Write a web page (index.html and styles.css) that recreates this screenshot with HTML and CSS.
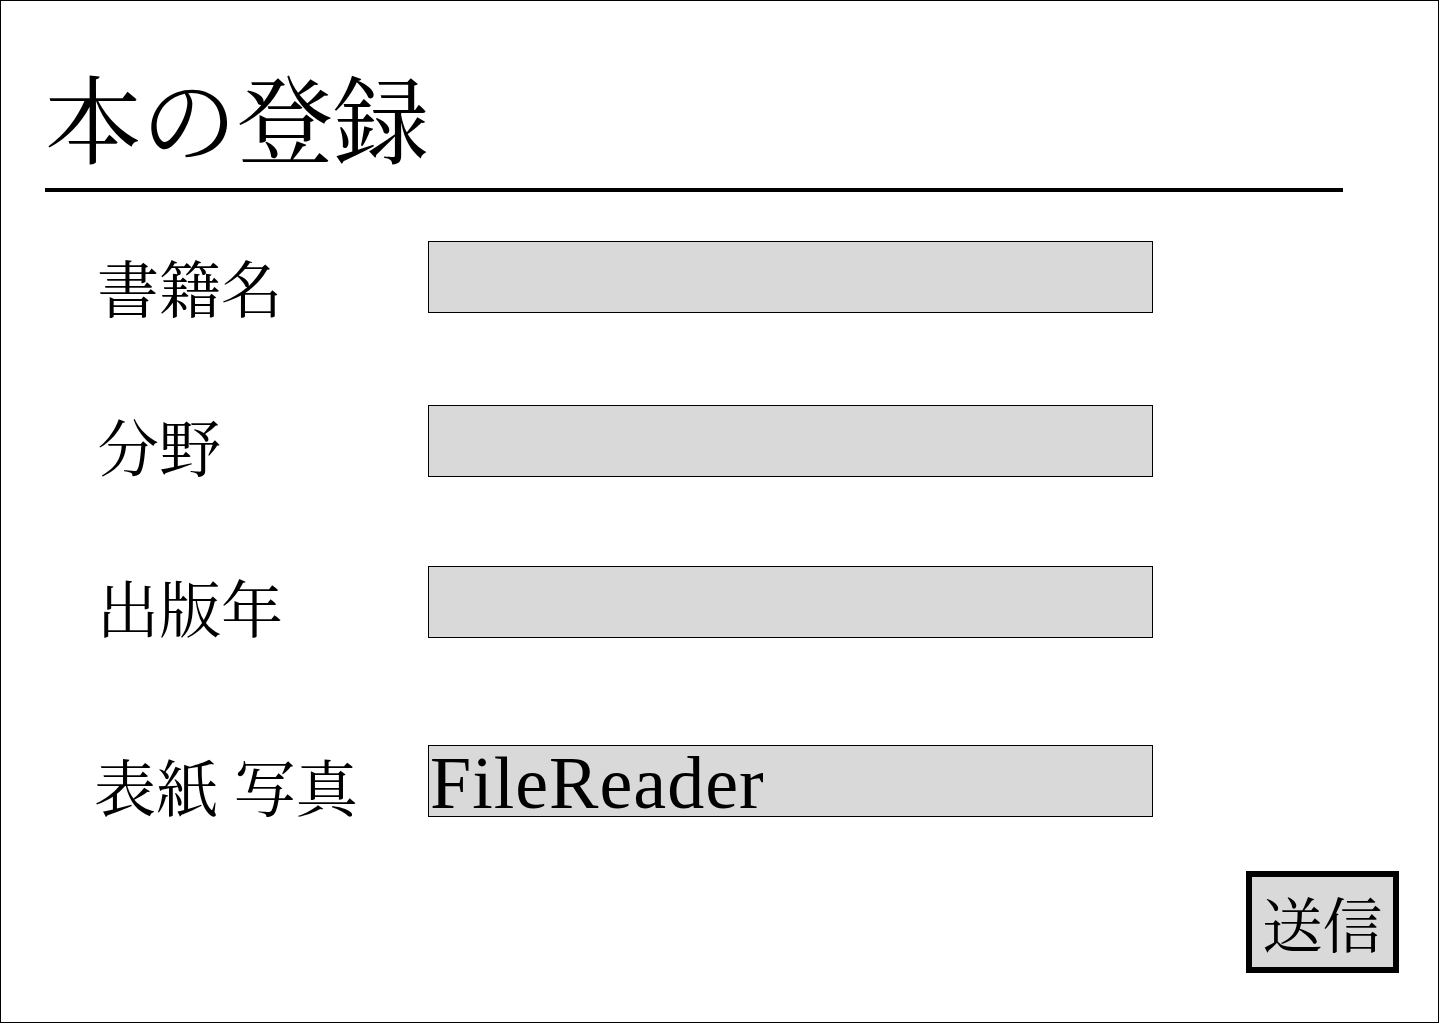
FILE: index.html
```html
<!DOCTYPE html>
<html lang="ja">
<head>
<meta charset="utf-8">
<title>本の登録</title>
<link rel="stylesheet" href="styles.css">
</head>
<body>
<div class="page">
  <header class="head">
    <h1 class="title">本の登録</h1>
  </header>
  <form class="form">
    <div class="row row-1">
      <label class="label">書籍名</label>
      <div class="field"></div>
    </div>
    <div class="row row-2">
      <label class="label">分野</label>
      <div class="field"></div>
    </div>
    <div class="row row-3">
      <label class="label">出版年</label>
      <div class="field"></div>
    </div>
    <div class="row row-4">
      <label class="label">表紙 写真</label>
      <div class="field file">FileReader</div>
    </div>
    <div class="actions">
      <button type="button" class="submit">送信</button>
    </div>
  </form>
</div>
</body>
</html>
```

FILE: styles.css
```css
html, body {
  margin: 0;
  padding: 0;
  background: #ffffff;
}

body {
  font-family: "Noto Serif CJK JP", "Liberation Serif", "Noto Sans CJK JP", serif;
  color: #000000;
}

.page {
  box-sizing: border-box;
  width: 1439px;
  height: 1023px;
  border: 1px solid #000000;
  overflow: hidden;
}

.head {
  margin: 66px 0 0 44px;
  width: 1298px;
  border-bottom: 4px solid #000000;
  padding-bottom: 25px;
}

.title {
  margin: 0;
  font-size: 96px;
  line-height: 96px;
  font-weight: 400;
}

.form {
  padding-left: 96px;
}

.row {
  display: grid;
  grid-template-columns: 331px 725px;
  align-items: start;
}

.row-1 { margin-top: 49px; }
.row-2 { margin-top: 87px; }
.row-3 { margin-top: 89px; }
.row-4 { margin-top: 107px; }

.label {
  font-size: 62px;
  line-height: 62px;
  margin-top: 10px;
  white-space: nowrap;
}

.row-1 .label {
  margin-top: 15px;
}

.row-4 .label {
  margin-left: -3px;
}

.field {
  box-sizing: border-box;
  height: 72px;
  background: #d9d9d9;
  border: 1px solid #000000;
}

.file {
  font-family: "Liberation Serif", "Noto Sans CJK JP", serif;
  font-size: 74px;
  line-height: 74px;
  letter-spacing: 1px;
  padding-left: 1px;
  white-space: nowrap;
}

.actions {
  display: flex;
  justify-content: flex-end;
  margin-top: 54px;
  padding-right: 39px;
}

.submit {
  box-sizing: border-box;
  width: 153px;
  height: 102px;
  background: #d9d9d9;
  border: 6px solid #000000;
  padding: 0;
  margin: 0;
  font-family: "Noto Serif CJK JP", "Noto Sans CJK JP", serif;
  font-size: 60px;
  line-height: 60px;
  color: #000000;
}
```
